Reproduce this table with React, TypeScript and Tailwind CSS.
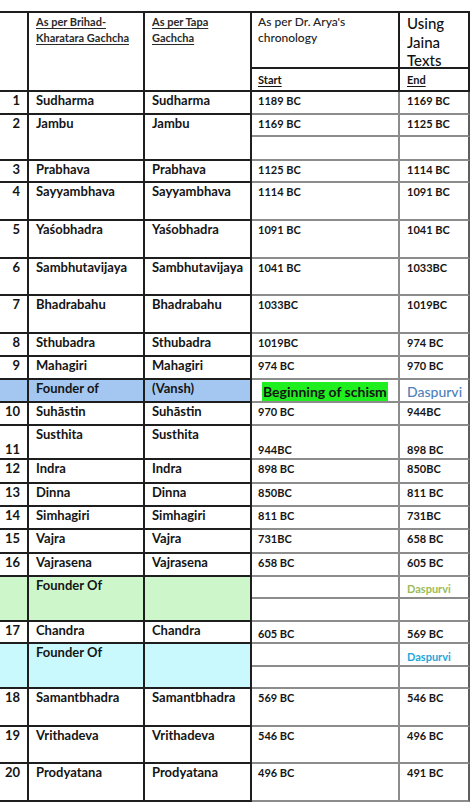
import React from "react";

const numCls =
  "border-b-2 border-r-2 border-[#1e1e1e] pr-[7px] text-right text-[13px] leading-[17px] font-bold text-[#151515]";
const leftCls =
  "border-b-2 border-r-2 border-[#1e1e1e] pl-[7px] text-[13px] leading-[17px] font-bold text-[#151515] whitespace-nowrap";
const startCls =
  "border-b-2 border-r-2 border-[#8c8c8c] pl-[6px] text-[11px] leading-[17px] font-bold text-[#151515] whitespace-nowrap";
const endCls =
  "border-b-2 border-r-2 border-b-[#8c8c8c] border-r-[#5e5e5e] pl-[7px] text-[11px] leading-[17px] font-bold text-[#151515] whitespace-nowrap";

type RowProps = { n: string; a: string; b: string; s: string; e: string };

function Row({ n, a, b, s, e }: RowProps) {
  return (
    <>
      <div className={numCls}>{n}</div>
      <div className={leftCls}>{a}</div>
      <div className={leftCls}>{b}</div>
      <div className={startCls}>{s}</div>
      <div className={endCls}>{e}</div>
    </>
  );
}

export default function App() {
  return (
    <div className="w-[474px] h-[807px] bg-white [font-family:Lato,'Noto_Sans',sans-serif] overflow-hidden">
      <div className="mt-[11px] w-[470px] border-t-2 border-[#1e1e1e] grid grid-cols-[29px_116px_107px_148px_70px] grid-rows-[56px_23px_23px_22px_24px_22px_38px_38px_37px_38px_23px_23px_23px_23px_34px_24px_23px_23px_24px_23px_22px_23px_22px_23px_22px_38px_37px_38px]">
        {/* Header */}
        <div className="row-span-2 border-b-2 border-r-2 border-[#1e1e1e]"></div>
        <div className="row-span-2 border-b-2 border-r-2 border-[#1e1e1e] pl-[7px] pt-[1px] text-[11px] leading-[16px] font-bold text-[#2a2a2a] underline underline-offset-2">
          As per Brihad-
          <br />
          Kharatara Gachcha
        </div>
        <div className="row-span-2 border-b-2 border-r-2 border-[#1e1e1e] pl-[7px] pt-[1px] text-[11px] leading-[16px] font-bold text-[#2a2a2a] underline underline-offset-2">
          As per Tapa
          <br />
          Gachcha
        </div>
        <div className="border-b-2 border-r-2 border-[#1e1e1e] pl-[6px] pt-[1px] text-[12px] leading-[16px] font-medium text-[#222]">
          As per Dr. Arya's
          <br />
          chronology
        </div>
        <div className="border-b-2 border-r-2 border-[#1e1e1e] pl-[7px] pt-[1px] text-[15px] leading-[18.5px] font-medium text-[#111]">
          Using
          <br />
          Jaina
          <br />
          Texts
        </div>
        <div className="border-b-2 border-r-2 border-[#1e1e1e] pl-[6px] text-[11px] leading-[21px] font-bold text-[#151515] underline underline-offset-2">
          Start
        </div>
        <div className="border-b-2 border-r-2 border-[#1e1e1e] pl-[7px] text-[11px] leading-[21px] font-bold text-[#151515] underline underline-offset-2">
          End
        </div>

        <Row n="1" a="Sudharma" b="Sudharma" s="1189 BC" e="1169 BC" />

        <div className={`row-span-2 ${numCls}`}>2</div>
        <div className={`row-span-2 ${leftCls}`}>Jambu</div>
        <div className={`row-span-2 ${leftCls}`}>Jambu</div>
        <div className={startCls}>1169 BC</div>
        <div className={endCls}>1125 BC</div>
        <div className={startCls}></div>
        <div className={endCls}></div>

        <Row n="3" a="Prabhava" b="Prabhava" s="1125 BC" e="1114 BC" />
        <Row n="4" a="Sayyambhava" b="Sayyambhava" s="1114 BC" e="1091 BC" />
        <Row n="5" a="Yaśobhadra" b="Yaśobhadra" s="1091 BC" e="1041 BC" />
        <Row n="6" a="Sambhutavijaya" b="Sambhutavijaya" s="1041 BC" e="1033BC" />
        <Row n="7" a="Bhadrabahu" b="Bhadrabahu" s="1033BC" e="1019BC" />
        <Row n="8" a="Sthubadra" b="Sthubadra" s="1019BC" e="974 BC" />
        <Row n="9" a="Mahagiri" b="Mahagiri" s="974 BC" e="970 BC" />

        <div className={`${numCls} bg-[#a3c7f1]`}></div>
        <div className={`${leftCls} bg-[#a3c7f1]`}>Founder of</div>
        <div className={`${leftCls} bg-[#a3c7f1]`}>(Vansh)</div>
        <div className="border-b-2 border-r-2 border-[#8c8c8c] pl-[10px] flex items-end">
          <span className="bg-[#1fef1f] px-[1px] text-[14px] leading-[19px] font-bold text-[#151515] whitespace-nowrap">
            Beginning of schism
          </span>
        </div>
        <div className="border-b-2 border-r-2 border-b-[#8c8c8c] border-r-[#5e5e5e] pl-[7px] flex items-end">
          <span className="text-[14px] leading-[19px] font-medium text-[#4f7fbb] whitespace-nowrap">Daspurvi</span>
        </div>

        <Row n="10" a="Suhāstin" b="Suhāstin" s="970 BC" e="944BC" />

        <div className={`${numCls} flex items-end justify-end`}>11</div>
        <div className={leftCls}>Susthita</div>
        <div className={leftCls}>Susthita</div>
        <div className={`${startCls} flex items-end`}>944BC</div>
        <div className={`${endCls} flex items-end`}>898 BC</div>

        <Row n="12" a="Indra" b="Indra" s="898 BC" e="850BC" />
        <Row n="13" a="Dinna" b="Dinna" s="850BC" e="811 BC" />
        <Row n="14" a="Simhagiri" b="Simhagiri" s="811 BC" e="731BC" />
        <Row n="15" a="Vajra" b="Vajra" s="731BC" e="658 BC" />
        <Row n="16" a="Vajrasena" b="Vajrasena" s="658 BC" e="605 BC" />

        <div className={`row-span-2 ${numCls} bg-[#cdf7cb]`}></div>
        <div className={`row-span-2 ${leftCls} bg-[#cdf7cb]`}>Founder Of</div>
        <div className={`row-span-2 ${leftCls} bg-[#cdf7cb]`}></div>
        <div className={startCls}></div>
        <div className={`${endCls} flex items-end`}>
          <span className="text-[#9bbb59]">Daspurvi</span>
        </div>
        <div className={startCls}></div>
        <div className={endCls}></div>

        <div className={numCls}>17</div>
        <div className={leftCls}>Chandra</div>
        <div className={leftCls}>Chandra</div>
        <div className={`${startCls} flex items-end`}>605 BC</div>
        <div className={`${endCls} flex items-end`}>569 BC</div>

        <div className={`row-span-2 ${numCls} bg-[#c9f8fd]`}></div>
        <div className={`row-span-2 ${leftCls} bg-[#c9f8fd]`}>Founder Of</div>
        <div className={`row-span-2 ${leftCls} bg-[#c9f8fd]`}></div>
        <div className={startCls}></div>
        <div className={`${endCls} flex items-end`}>
          <span className="text-[#1ea7dc]">Daspurvi</span>
        </div>
        <div className={startCls}></div>
        <div className={endCls}></div>

        <Row n="18" a="Samantbhadra" b="Samantbhadra" s="569 BC" e="546 BC" />
        <Row n="19" a="Vrithadeva" b="Vrithadeva" s="546 BC" e="496 BC" />
        <Row n="20" a="Prodyatana" b="Prodyatana" s="496 BC" e="491 BC" />
      </div>
    </div>
  );
}
